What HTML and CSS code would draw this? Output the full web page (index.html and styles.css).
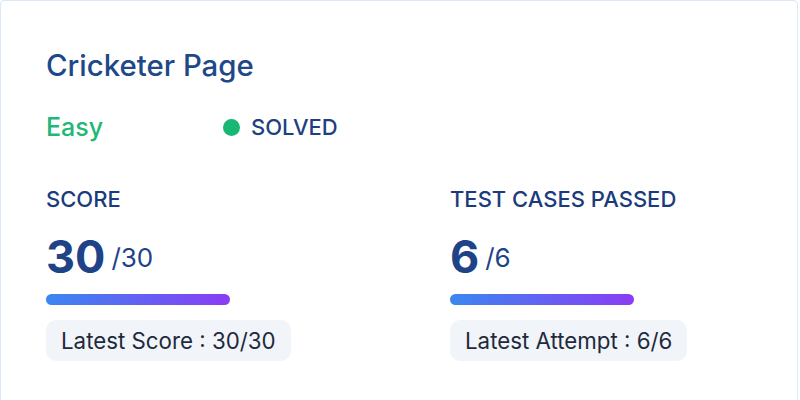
FILE: index.html
```html
<!DOCTYPE html>
<html>
<head>
<meta charset="utf-8">
<link rel="stylesheet" href="styles.css">
</head>
<body>
<div class="card">
  <h1 class="title">Cricketer Page</h1>
  <div class="meta">
    <span class="difficulty">Easy</span>
    <span class="status"><span class="dot"></span>SOLVED</span>
  </div>
  <div class="stats">
    <div class="stat">
      <div class="label">SCORE</div>
      <div class="value"><span class="big">30</span><span class="total">/30</span></div>
      <div class="bar"></div>
      <div class="pill">Latest Score : 30/30</div>
    </div>
    <div class="stat">
      <div class="label">TEST CASES PASSED</div>
      <div class="value"><span class="big">6</span><span class="total">/6</span></div>
      <div class="bar"></div>
      <div class="pill">Latest Attempt : 6/6</div>
    </div>
  </div>
</div>
</body>
</html>
```
FILE: styles.css
```css
* { box-sizing: border-box; }
html, body { margin: 0; padding: 0; background: #ffffff; overflow: hidden; }
body { font-family: Inter, "Noto Sans", sans-serif; }
.card {
  width: 798px;
  height: 420px;
  border: 1px solid #dce8f8;
  border-radius: 4px;
  padding: 47px 45px 0 45px;
  background: #ffffff;
}
.title {
  margin: 0;
  font-size: 29.4px;
  line-height: 36px;
  font-weight: 500;
  color: #1e4888;
}
.meta {
  display: flex;
  align-items: center;
  margin-top: 27px;
  height: 32px;
}
.difficulty {
  width: 177px;
  font-size: 25px;
  line-height: 32px;
  font-weight: 500;
  color: #1fb877;
}
.status {
  display: flex;
  align-items: center;
  font-size: 22px;
  line-height: 32px;
  font-weight: 500;
  color: #1e3f80;
}
.dot {
  width: 17px;
  height: 17px;
  border-radius: 50%;
  background: #16b873;
  margin-right: 11px;
}
.stats {
  display: grid;
  grid-template-columns: 404px 1fr;
  margin-top: 44px;
}
.label {
  font-size: 22px;
  line-height: 24px;
  font-weight: 500;
  color: #1a3c7c;
}
.value {
  display: flex;
  align-items: center;
  margin-top: 21px;
  height: 50px;
}
.big {
  font-size: 45px;
  line-height: 50px;
  font-weight: 700;
  color: #1e4387;
}
.total {
  margin-left: 6px;
  font-size: 26px;
  color: #1e4387;
}
.bar {
  width: 184px;
  height: 11px;
  border-radius: 6px;
  background: linear-gradient(90deg, #3b87f0, #8b3cf4);
  margin-top: 12px;
}
.pill {
  display: inline-block;
  margin-top: 15px;
  padding: 0 15px;
  height: 41px;
  line-height: 41px;
  border-radius: 10px;
  background: #f1f4f9;
  font-size: 22.3px;
  color: #1f2a3c;
}
```
